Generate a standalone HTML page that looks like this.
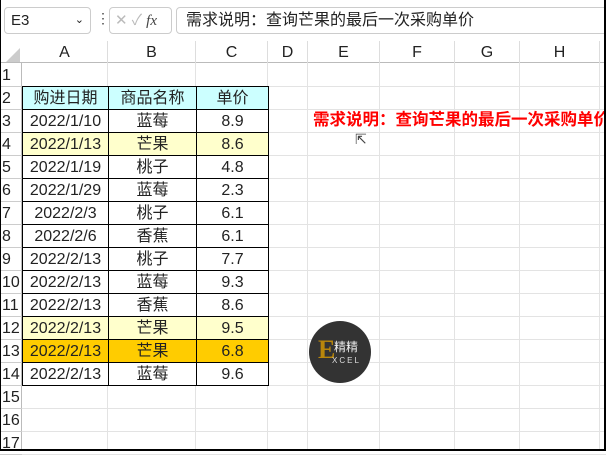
<!DOCTYPE html><html><head><meta charset="utf-8"><style>
*{margin:0;padding:0;box-sizing:border-box}
body{width:606px;height:451px;overflow:hidden;background:#fff;font-family:"Liberation Sans","Noto Sans CJK SC",sans-serif;position:relative}
.a{position:absolute}
.frame{position:absolute;left:0;top:0;width:606px;height:451px;border:2px solid #000;border-top:none;border-left:1px solid #000;pointer-events:none}
.cell{position:absolute;text-align:center;font-size:16px;line-height:23px;color:#222}
</style></head><body>
<div class="a" style="left:0;top:0;width:606px;height:42px;background:#fff"></div>
<div class="a" style="left:4px;top:7px;width:87px;height:27px;border:1px solid #ccc;border-radius:4px;font-size:15px;line-height:25px;padding-left:6px;color:#222">E3<span style="position:absolute;right:6px;top:0;font-size:11px">&#8964;</span></div>
<div class="a" style="left:96px;top:10px;font-size:14px;color:#444">⋮</div>
<div class="a" style="left:109px;top:7px;width:63px;height:27px;border:1px solid #ccc;border-radius:4px;color:#bbb;font-size:15px;line-height:25px;padding-left:5px">✕ ✓ <i style="color:#444;font-family:'Liberation Serif',serif">fx</i></div>
<div class="a" style="left:176px;top:7px;width:440px;height:27px;border:1px solid #ccc;border-radius:4px;font-size:16px;line-height:25px;padding-left:9px;color:#222">需求说明：查询芒果的最后一次采购单价</div>
<div class="a" style="left:0;top:42px;width:606px;height:21px;background:#fff;border-bottom:1px solid #bbb"></div>
<div class="a" style="left:0;top:63px;width:22px;height:388px;border-right:1px solid #bbb"></div>
<svg class="a" style="left:6px;top:48px" width="14" height="14"><polygon points="14,0 14,14 0,14" fill="#ccc"/></svg>
<div id="g"></div>
<div class="a" style="left:313px;top:109px;color:#f00;font-weight:bold;font-size:16.5px;line-height:23px;white-space:nowrap">需求说明：查询芒果的最后一次采购单价</div>
<div class="a" style="left:355px;top:131px;font-size:14px;color:#444">⇱</div>
<div class="a" style="left:309px;top:321px;width:62px;height:62px;border-radius:50%;background:#333"></div>
<div class="a" style="left:318px;top:337px;font-family:'Liberation Serif',serif;font-weight:bold;color:#b8860b;font-size:26px;line-height:26px">E</div>
<div class="a" style="left:334px;top:340px;color:#eee;font-size:12px;line-height:14px">精精</div>
<div class="a" style="left:332px;top:356px;color:#ddd;font-size:8px;letter-spacing:2px">XCEL</div>
<div class="frame"></div>
<script>
var cols=[["A",22,108],["B",108,196],["C",196,268],["D",268,308],["E",308,380],["F",380,455],["G",455,520],["H",520,600]];
var h="";
cols.forEach(function(c){h+='<div class="cell" style="left:'+c[1]+'px;top:41px;width:'+(c[2]-c[1])+'px;height:22px;border-right:1px solid #ddd">'+c[0]+'</div>';
h+='<div class="a" style="left:'+(c[2]-1)+'px;top:63px;width:1px;height:388px;background:#e3e3e3"></div>';});
for(var i=1;i<=17;i++){var t=64+23*(i-1);
h+='<div class="cell" style="left:0;top:'+t+'px;width:22px;text-align:left;padding-left:2px;border-bottom:1px solid #ccc;height:23px">'+i+'</div>';
h+='<div class="a" style="left:22px;top:'+(t+22)+'px;width:584px;height:1px;background:#e3e3e3"></div>';}
var d=[["购进日期","商品名称","单价"],["2022/1/10","蓝莓","8.9"],["2022/1/13","芒果","8.6"],["2022/1/19","桃子","4.8"],["2022/1/29","蓝莓","2.3"],["2022/2/3","桃子","6.1"],["2022/2/6","香蕉","6.1"],["2022/2/13","桃子","7.7"],["2022/2/13","蓝莓","9.3"],["2022/2/13","香蕉","8.6"],["2022/2/13","芒果","9.5"],["2022/2/13","芒果","6.8"],["2022/2/13","蓝莓","9.6"]];
var x=[22,108,196,268];
d.forEach(function(r,k){var t=86+23*k;var bg=k==0?"#ccffff":(k==2||k==10)?"#ffffcc":k==11?"#ffcc00":"#fff";
for(var j=0;j<3;j++){h+='<div class="cell" style="left:'+x[j]+'px;top:'+t+'px;width:'+(x[j+1]-x[j]+1)+'px;height:24px;border:1px solid #000;background:'+bg+'">'+r[j]+'</div>';}});
document.getElementById("g").innerHTML=h;
</script>
</body></html>
